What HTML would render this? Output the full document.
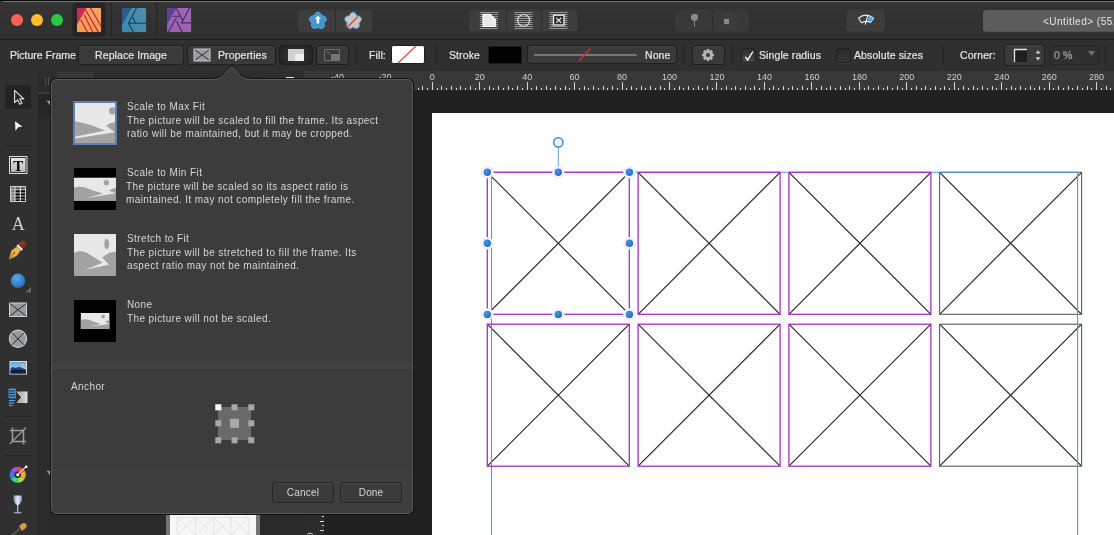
<!DOCTYPE html>
<html><head><meta charset="utf-8">
<style>
*{margin:0;padding:0;box-sizing:border-box}
html,body{width:1114px;height:535px;overflow:hidden;background:#222;font-family:"Liberation Sans",sans-serif;color:#d8d8d8}
.a{position:absolute}
.lbl,.pt,.gs{will-change:transform}
#title{left:0;top:0;width:1114px;height:39px;background:linear-gradient(#353535,#2f2f2f);border-top:1px solid #0a0a0a}
#title:before{content:"";position:absolute;left:3px;top:0;width:1111px;height:1px;background:#757575}
#tline{left:0;top:39px;width:1114px;height:1px;background:#1c1c1c}
#toolbar{left:0;top:40px;width:1114px;height:31px;background:#2f2f2f}
#tools{left:0;top:71px;width:38px;height:464px;background:#303030}
#pages{left:38px;top:71px;width:266px;height:464px;background:linear-gradient(#2e2e2e,#2c2c2c 8px,#2a2a2a 22px)}
#hruler{left:304px;top:71px;width:810px;height:19px;background:#383838}
#vruler{left:304px;top:90px;width:20px;height:445px;background:#2c2c2c}
#canvas{left:324px;top:90px;width:790px;height:445px;background:#212121}
#page{left:432px;top:113px;width:682px;height:422px;background:#fff}
.btn{position:absolute;background:#3a3a3a;border:1px solid #1f1f1f;border-radius:3px;box-shadow:inset 0 1px 0 #444}
.lbl{position:absolute;font-size:10.5px;color:#e6e6e6;white-space:nowrap;line-height:12px;letter-spacing:0.1px;-webkit-text-stroke:0.2px #e6e6e6}
.sep{position:absolute;width:1px;background:#232323}
.tgrp{position:absolute;background:#3b3b3b;border-radius:4px}
#pop{left:51px;top:79px;width:362px;height:435px;background:#3c3c3c;border:1px solid #5a5a5a;border-radius:5px;box-shadow:0 0 0 1px #111}
.pt{position:absolute;font-size:10px;letter-spacing:0.4px;color:#d6d6d6;white-space:nowrap;line-height:13px}
.pbtn{position:absolute;background:#3b3b3b;border:1px solid #252525;border-radius:3px;box-shadow:inset 0 1px 0 #454545}
</style></head><body>
<div id="title" class="a"></div>

<svg class="a" style="left:0;top:0" width="1114" height="39" viewBox="0 0 1114 39">
<defs>
<linearGradient id="pubg" x1="0" y1="0" x2="0" y2="1"><stop offset="0" stop-color="#f7a468"/><stop offset="1" stop-color="#fb9a4e"/></linearGradient>
<linearGradient id="desg" x1="1" y1="0" x2="0" y2="1"><stop offset="0" stop-color="#4e8fa5"/><stop offset="1" stop-color="#3a88b5"/></linearGradient>
<linearGradient id="phog" x1="1" y1="0" x2="0" y2="1"><stop offset="0" stop-color="#9f6ab0"/><stop offset="1" stop-color="#9c5bb2"/></linearGradient>
<clipPath id="c1"><rect x="77" y="8" width="24.3" height="24.3" rx="1.5"/></clipPath>
<clipPath id="c2"><rect x="122" y="8" width="24.3" height="24.3" rx="1.5"/></clipPath>
<clipPath id="c3"><rect x="167" y="8" width="24.3" height="24.3" rx="1.5"/></clipPath>
</defs>
<circle cx="17" cy="20" r="6" fill="#fe5f57"/>
<circle cx="37" cy="20" r="6" fill="#febc2e"/>
<circle cx="57" cy="20" r="6" fill="#28c840"/>
<rect x="72.5" y="3" width="33" height="33.5" rx="4" fill="#242424"/>
<g clip-path="url(#c1)">
<rect x="77" y="8" width="24.3" height="24.3" fill="url(#pubg)"/>
<path d="M77 8H86.6L77 24.6Z" fill="#c8294e"/>
<g stroke="#b8203f" stroke-width="1.1"><path d="M90.3 7.5L101.5 27M85.8 10.3L98.7 32.6M84 14.5L93.1 32.6M80.7 19.8L87.7 32.6"/></g>
</g>
<path d="M111.5 3V37M156.5 3V37" stroke="#232323" stroke-width="1"/>
<g clip-path="url(#c2)">
<rect x="122" y="8" width="24.3" height="24.3" fill="url(#desg)"/>
<path d="M122 8H131.6L122 24.9Z" fill="#2b5b8a"/>
<g stroke="#1e3d5e" stroke-width="1.1" fill="none"><path d="M136.7 7.5L128.5 23.2L133.5 32.6M128.5 23.2H146.5M132.7 17.1L135.8 23.2"/></g>
</g>
<g clip-path="url(#c3)">
<rect x="167" y="8" width="24.3" height="24.3" fill="url(#phog)"/>
<path d="M167 8H176.6L167 24.6Z" fill="#5c4590"/>
<g stroke="#3d2d6a" stroke-width="1.1" fill="none"><path d="M176.4 8.5L182.8 20.5M172.4 16.2H180.8M189.8 7.5L181.6 22.9H191.5M176.5 17.5L168 32.6M176.8 21.5L182.3 32.6"/></g>
</g>
<rect x="298" y="10" width="74" height="22" rx="3.5" fill="#3d3d3d"/>
<path d="M335.5 10V32" stroke="#2d2d2d"/>
<path d="M317.90 12.30L318.44 12.35L318.96 12.50L319.46 12.74L319.91 13.07L320.32 13.47L320.67 13.91L320.96 14.39L321.21 14.89L321.41 15.37L321.60 15.80L322.07 15.85L322.60 15.90L323.14 15.98L323.69 16.11L324.22 16.31L324.73 16.57L325.18 16.90L325.56 17.30L325.86 17.75L326.08 18.24L326.20 18.77L326.22 19.31L326.14 19.86L325.97 20.39L325.72 20.90L325.40 21.37L325.03 21.80L324.64 22.19L324.24 22.53L323.89 22.85L323.99 23.31L324.11 23.82L324.20 24.36L324.25 24.93L324.22 25.49L324.13 26.05L323.95 26.58L323.70 27.07L323.36 27.50L322.95 27.86L322.49 28.13L321.98 28.32L321.44 28.41L320.88 28.42L320.32 28.33L319.77 28.18L319.25 27.96L318.76 27.71L318.31 27.44L317.90 27.20L317.49 27.44L317.04 27.71L316.55 27.96L316.03 28.18L315.48 28.33L314.92 28.42L314.36 28.41L313.82 28.32L313.31 28.13L312.85 27.86L312.44 27.50L312.10 27.07L311.85 26.58L311.67 26.05L311.58 25.49L311.55 24.93L311.60 24.36L311.69 23.82L311.81 23.31L311.91 22.85L311.56 22.53L311.16 22.19L310.77 21.80L310.40 21.37L310.08 20.90L309.83 20.39L309.66 19.86L309.58 19.31L309.60 18.77L309.72 18.24L309.94 17.75L310.24 17.30L310.62 16.90L311.07 16.57L311.58 16.31L312.11 16.11L312.66 15.98L313.20 15.90L313.73 15.85L314.20 15.80L314.39 15.37L314.59 14.89L314.84 14.39L315.13 13.91L315.48 13.47L315.89 13.07L316.34 12.74L316.84 12.50L317.36 12.35L317.90 12.30Z" fill="#3d97d6" stroke="#6cb8ec" stroke-width="1"/>
<path d="M317.9 15.5L321 19H319.2V23.5H316.6V19H314.8Z" fill="#fff"/>
<path d="M353.10 12.30L353.64 12.35L354.16 12.50L354.66 12.74L355.11 13.07L355.52 13.47L355.87 13.91L356.16 14.39L356.41 14.89L356.61 15.37L356.80 15.80L357.27 15.85L357.80 15.90L358.34 15.98L358.89 16.11L359.42 16.31L359.93 16.57L360.38 16.90L360.76 17.30L361.06 17.75L361.28 18.24L361.40 18.77L361.42 19.31L361.34 19.86L361.17 20.39L360.92 20.90L360.60 21.37L360.23 21.80L359.84 22.19L359.44 22.53L359.09 22.85L359.19 23.31L359.31 23.82L359.40 24.36L359.45 24.93L359.42 25.49L359.33 26.05L359.15 26.58L358.90 27.07L358.56 27.50L358.15 27.86L357.69 28.13L357.18 28.32L356.64 28.41L356.08 28.42L355.52 28.33L354.97 28.18L354.45 27.96L353.96 27.71L353.51 27.44L353.10 27.20L352.69 27.44L352.24 27.71L351.75 27.96L351.23 28.18L350.68 28.33L350.12 28.42L349.56 28.41L349.02 28.32L348.51 28.13L348.05 27.86L347.64 27.50L347.30 27.07L347.05 26.58L346.87 26.05L346.78 25.49L346.75 24.93L346.80 24.36L346.89 23.82L347.01 23.31L347.11 22.85L346.76 22.53L346.36 22.19L345.97 21.80L345.60 21.37L345.28 20.90L345.03 20.39L344.86 19.86L344.78 19.31L344.80 18.77L344.92 18.24L345.14 17.75L345.44 17.30L345.82 16.90L346.27 16.57L346.78 16.31L347.31 16.11L347.86 15.98L348.40 15.90L348.93 15.85L349.40 15.80L349.59 15.37L349.79 14.89L350.04 14.39L350.33 13.91L350.68 13.47L351.09 13.07L351.54 12.74L352.04 12.50L352.56 12.35L353.10 12.30Z" fill="#c6c6c6" stroke="#4a9ee0" stroke-width="1"/>
<path d="M347.3 27.2L357.8 16.8" stroke="#f03a2c" stroke-width="1.3"/>
<rect x="469" y="10" width="108.5" height="21.6" rx="3.5" fill="#3d3d3d"/>
<path d="M506.5 10V31.6M541.5 10V31.6" stroke="#2d2d2d"/>
<g stroke="#9e9e9e" stroke-width="0.9">
<path d="M479.8 12.5H498M479.8 14.5H498M479.8 16.5H498M479.8 18.5H498M479.8 20.5H498M479.8 22.5H498M479.8 24.5H498M479.8 26.5H498M479.8 28.5H498"/><path d="M514.5 12.5H532.5M514.5 14.5H532.5M514.5 16.5H532.5M514.5 18.5H532.5M514.5 20.5H532.5M514.5 22.5H532.5M514.5 24.5H532.5M514.5 26.5H532.5M514.5 28.5H532.5"/><path d="M549.5 12.5H567.5M549.5 14.5H567.5M549.5 16.5H567.5M549.5 18.5H567.5M549.5 20.5H567.5M549.5 22.5H567.5M549.5 24.5H567.5M549.5 26.5H567.5M549.5 28.5H567.5"/></g>
<path d="M483 14.3H490L495.2 19.3V26.5H483Z" fill="#e8e8e8" stroke="#fff" stroke-width="1.2"/>
<circle cx="523.6" cy="20.4" r="5.9" fill="none" stroke="#e6e6e6" stroke-width="1.1"/>
<rect x="553.5" y="15.2" width="10.5" height="9.8" fill="#2e2e2e" stroke="#f0f0f0" stroke-width="1.3"/>
<path d="M556.3 18L561.2 22.6M561.2 18L556.3 22.6" stroke="#f0f0f0" stroke-width="1.2"/>
<rect x="675.3" y="10" width="73.5" height="21.8" rx="3.5" fill="#393939"/>
<path d="M712.4 10V31.8" stroke="#2d2d2d"/>
<circle cx="694.5" cy="17.3" r="3.6" fill="#8a8a8a"/>
<path d="M694.5 20V26.6" stroke="#8a8a8a" stroke-width="1"/>
<g stroke="#444" stroke-width="0.8"><path d="M722 13.3H732M722 15.3H738M722 17.3H732M730 19.3H738M730 21.3H736M730 23.3H738M722 25.3H732M722 27.3H738"/></g>
<rect x="724" y="18.9" width="5" height="5" fill="#8c8c8c"/>
<rect x="846.4" y="10.2" width="38.4" height="21.6" rx="3.5" fill="#3d3d3d"/>
<path d="M858.6 18.2Q865.5 12 873.6 18.2L870.5 22.5Q867.2 20.2 861.5 22.7Z" fill="none" stroke="#f2f2f2" stroke-width="1.1" stroke-linejoin="round"/>
<path d="M868.2 16.5Q871 16.8 873.2 18.2L870.6 21.8Q869.2 20.6 867.6 20.4Z" fill="#4da3ea"/>
<path d="M867.5 16.2L865.3 24.7" stroke="#f2f2f2" stroke-width="1.1"/>
<rect x="983" y="10" width="140" height="21.8" rx="3.5" fill="#5c5c5c"/>
</svg>
<div class="a gs" style="left:1043px;top:15px;font-size:10px;color:#e6e6e6;white-space:nowrap;line-height:13px;letter-spacing:0.5px">&lt;Untitled&gt; (55.3%)</div>
<div id="tline" class="a"></div>
<div id="toolbar" class="a"></div>
<div id="tools" class="a"></div>
<!-- TOOLBAR -->
<div class="lbl" style="left:10px;top:49px;letter-spacing:0">Picture Frame</div>
<div class="btn" style="left:78px;top:45px;width:106px;height:20px"></div>
<div class="lbl" style="left:78px;top:49px;width:106px;text-align:center">Replace Image</div>
<div class="btn" style="left:187px;top:45px;width:89px;height:20px"></div>
<svg class="a" style="left:193px;top:48px" width="18" height="14"><rect x="1" y="1" width="16" height="12" fill="#9c9c9c" stroke="#c8c8c8" stroke-width="1"/><path d="M2 2L16 12M16 2L2 12" stroke="#25325a" stroke-width="1"/></svg>
<div class="lbl" style="left:218px;top:49px">Properties</div>
<div class="btn" style="left:279px;top:45px;width:34px;height:20px;background:radial-gradient(ellipse at center,#3a3a3a 0%,#2a2a2a 60%,#1f1f1f 100%);box-shadow:none"></div>
<svg class="a" style="left:288px;top:49px" width="16" height="12"><rect x="0" y="0" width="16" height="12" fill="#d0d0d0"/><rect x="7" y="5" width="9" height="7" fill="#efefef"/></svg>
<div class="btn" style="left:316px;top:45px;width:33px;height:20px"></div>
<svg class="a" style="left:324px;top:49px" width="16" height="12"><rect x="0.5" y="0.5" width="15" height="11" fill="#3a3a3a" stroke="#6c6c6c"/><rect x="7" y="5" width="8.5" height="6.5" fill="#777"/><path d="M2 2L6 5" stroke="#6c6c6c"/></svg>
<div class="sep" style="left:356px;top:46px;height:19px"></div>
<div class="lbl" style="left:369px;top:49px">Fill:</div>
<svg class="a" style="left:391px;top:45px" width="34" height="19"><rect x="0.5" y="0.5" width="33" height="18" rx="2" fill="#fff" stroke="#1e1e1e"/><path d="M7 18L25 1" stroke="#f0484e" stroke-width="1.3"/></svg>
<div class="sep" style="left:436px;top:46px;height:19px"></div>
<div class="lbl" style="left:449px;top:49px">Stroke</div>
<div class="a" style="left:488px;top:46px;width:34px;height:18px;background:#000;border:1px solid #1c1c1c;border-radius:1px"></div>
<div class="btn" style="left:527px;top:45px;width:150px;height:19px"></div>
<div class="a" style="left:534px;top:54px;width:103px;height:2px;background:#777;border-radius:1px"></div>
<svg class="a" style="left:577px;top:47px" width="16" height="15"><path d="M2.5 13.5L13.5 1.5" stroke="#d8303a" stroke-width="1.5"/></svg>
<div class="lbl" style="left:645px;top:49px">None</div>
<div class="sep" style="left:683px;top:46px;height:19px"></div>
<div class="btn" style="left:692px;top:45px;width:33px;height:20px"></div>
<svg class="a" style="left:700px;top:47px" width="16" height="16" viewBox="0 0 16 16"><g fill="#b4b4b4"><circle cx="8" cy="8" r="4.8"/><rect x="6.7" y="2" width="2.6" height="12" rx="0.4"/><rect x="6.7" y="2" width="2.6" height="12" rx="0.4" transform="rotate(45 8 8)"/><rect x="6.7" y="2" width="2.6" height="12" rx="0.4" transform="rotate(90 8 8)"/><rect x="6.7" y="2" width="2.6" height="12" rx="0.4" transform="rotate(135 8 8)"/></g><circle cx="8" cy="8" r="2.1" fill="#3a3a3a"/></svg>
<div class="sep" style="left:732px;top:46px;height:19px"></div>
<div class="a" style="left:741px;top:48px;width:15px;height:15px;background:linear-gradient(#2e2e2e,#474747);border:1px solid #1f1f1f;border-radius:3px;box-shadow:0 1px 0 #3a3a3a"></div>
<svg class="a" style="left:742px;top:49px" width="14" height="14"><path d="M3.8 8.3L5.6 11.2L10.6 3" stroke="#fff" stroke-width="1.4" fill="none" stroke-linecap="round" stroke-linejoin="round"/></svg>
<div class="lbl" style="left:759px;top:49px">Single radius</div>
<div class="a" style="left:836px;top:48px;width:15px;height:15px;background:linear-gradient(#2a2a2a,#353535);border:1px solid #1f1f1f;border-radius:3px;box-shadow:0 1px 0 #3a3a3a"></div>
<div class="lbl" style="left:854px;top:49px">Absolute sizes</div>
<div class="sep" style="left:943px;top:46px;height:19px"></div>
<div class="lbl" style="left:960px;top:49px">Corner:</div>
<div class="btn" style="left:1004px;top:44px;width:41px;height:22px"></div>
<svg class="a" style="left:1013px;top:48px" width="16" height="15"><rect x="1" y="1" width="13" height="13" fill="#1e1e1e"/><path d="M1.5 14V1.5H14" stroke="#e6e6e6" stroke-width="1.3" fill="none"/></svg>
<svg class="a" style="left:1034px;top:48px" width="8" height="15"><path d="M4 2.2L6.4 5.6H1.6Z M1.6 9.2H6.4L4 12.6Z" fill="#d0d0d0"/></svg>
<div class="a" style="left:1050px;top:45px;width:49px;height:20px;background:#303030;border:1px solid #262626;border-radius:3px;box-shadow:inset 0 1px 0 #2a2a2a"></div>
<div class="lbl" style="left:1054px;top:49px;color:#6e6e6e">0 %</div>
<svg class="a" style="left:1088px;top:51px" width="8" height="7"><path d="M0 0H7L3.5 5Z" fill="#6e6e6e"/></svg>
<div class="sep" style="left:1105px;top:46px;height:19px"></div>

<div id="pages" class="a"></div>
<svg class="a gs" style="left:0;top:0" width="38" height="535" viewBox="0 0 38 535">
<defs>
<linearGradient id="tg" x1="0" y1="0" x2="0" y2="1"><stop offset="0" stop-color="#e8e8e8"/><stop offset="1" stop-color="#b8b8b8"/></linearGradient>
<radialGradient id="bg1" cx="0.4" cy="0.3" r="0.8"><stop offset="0" stop-color="#5aa8ee"/><stop offset="1" stop-color="#1d64b6"/></radialGradient>
<linearGradient id="sky" x1="0" y1="0" x2="0" y2="1"><stop offset="0" stop-color="#5ea9e6"/><stop offset="1" stop-color="#c9e2f5"/></linearGradient>
<linearGradient id="wrap" x1="0" y1="0" x2="1" y2="0"><stop offset="0" stop-color="#9a9a9a"/><stop offset="1" stop-color="#e0e0e0"/></linearGradient>
<linearGradient id="glass" x1="0" y1="0" x2="1" y2="0"><stop offset="0" stop-color="#7f8fb0"/><stop offset="0.5" stop-color="#e6ecf6"/><stop offset="1" stop-color="#8e9cc0"/></linearGradient>
</defs>
<!-- selected move tool -->
<rect x="5" y="85" width="26" height="24" rx="3" fill="#232323"/>
<path d="M14.6 90.3V102.6L17.5 99.9L19.8 104.3L22 103.2L19.8 98.9H23.8Z" fill="#2a2a2a" stroke="#e0e0e0" stroke-width="1.1" stroke-linejoin="round"/>
<!-- node tool -->
<path d="M14.6 120.6L23.4 126.8L18.4 127.6L15.1 131.8Z" fill="#fff" stroke="#111" stroke-width="0.7" stroke-linejoin="round"/>
<path d="M5 145.5H31" stroke="#262626" stroke-width="1"/>
<!-- T tool -->
<rect x="9.5" y="156.5" width="17.5" height="17" fill="none" stroke="#dcdcdc" stroke-width="1"/>
<rect x="11" y="158" width="14.5" height="14" fill="url(#tg)"/>
<text x="18.3" y="170.6" font-family="Liberation Serif" font-size="15" font-weight="bold" fill="#000" text-anchor="middle">T</text>
<!-- table -->
<rect x="10" y="186" width="16" height="16" fill="#cfcfcf"/>
<g fill="#000"><rect x="15.6" y="187.2" width="4.2" height="2.1" fill="#555"/><rect x="21" y="187.2" width="4" height="2.1" fill="#555"/>
<rect x="11.2" y="187.2" width="3.2" height="2.1" fill="#666"/>
<rect x="11.2" y="190.3" width="3.2" height="2.1" fill="#777"/><rect x="15.6" y="190.3" width="4.2" height="2.1"/><rect x="21" y="190.3" width="4" height="2.1"/>
<rect x="11.2" y="193.4" width="3.2" height="2.1" fill="#777"/><rect x="15.6" y="193.4" width="4.2" height="2.1"/><rect x="21" y="193.4" width="4" height="2.1"/>
<rect x="11.2" y="196.5" width="3.2" height="2.1" fill="#777"/><rect x="15.6" y="196.5" width="4.2" height="2.1"/><rect x="21" y="196.5" width="4" height="2.1"/>
<rect x="11.2" y="199.4" width="3.2" height="1.6" fill="#777"/><rect x="15.6" y="199.4" width="4.2" height="1.6"/><rect x="21" y="199.4" width="4" height="1.6"/></g>
<!-- A -->
<text x="18.2" y="229.8" font-family="Liberation Serif" font-size="18" fill="#cfcfcf" text-anchor="middle">A</text>
<!-- pen -->
<path d="M9 259.5L11.5 250.5L17 246.5L20.8 250.3L16.8 255.8Z" fill="#f0b54a" stroke="#b07820" stroke-width="0.6"/>
<path d="M9.2 259.3L14.2 252.8" stroke="#7a4a10" stroke-width="0.7"/>
<circle cx="14.4" cy="252.6" r="0.9" fill="#7a4a10"/>
<path d="M16.5 245.8L21.5 250.8L23 249.3L18 244.3Z" fill="#f2f2f2"/>
<path d="M18.2 243.8L23.3 248.9L27.4 243.5L24 240.8Z" fill="#8a2a1a"/>
<path d="M19 244.2L24.2 241.6" stroke="#c0604a" stroke-width="0.8"/>
<!-- circle tool -->
<circle cx="18" cy="280.8" r="7.2" fill="url(#bg1)"/>
<path d="M31 287V292.6H25.4Z" fill="#666"/>
<!-- rect frame -->
<rect x="9.5" y="303" width="17" height="13.5" fill="#9a9a9a" stroke="#d0d0d0" stroke-width="1"/>
<path d="M10.2 303.7L25.8 315.8M25.8 303.7L10.2 315.8" stroke="#1c2850" stroke-width="1"/>
<!-- ellipse frame -->
<circle cx="18" cy="338.8" r="8.6" fill="#9a9a9a" stroke="#cfcfcf" stroke-width="1.2"/>
<path d="M12 332.8L24 344.8M24 332.8L12 344.8" stroke="#1c2850" stroke-width="1"/>
<!-- image icon -->
<rect x="9.5" y="361" width="17.5" height="13.5" fill="#dcdcdc"/>
<rect x="10.5" y="362" width="15.5" height="11.5" fill="url(#sky)"/>
<circle cx="22.5" cy="365" r="1.6" fill="#f5b82e"/>
<path d="M10.5 368.2L13 366.5L15.5 368L19 366.8L26 369.5V373.5H10.5Z" fill="#27457a"/>
<path d="M10.5 370.5Q16 368.5 26 370.8V373.5H10.5Z" fill="#0f1f3e"/>
<path d="M12 367L13 366.4L14.2 367.2Z" fill="#fff"/>
<!-- text wrap -->
<g fill="#4aa0e8"><rect x="9.3" y="389" width="5.8" height="1.3"/><rect x="9.3" y="391.5" width="5.8" height="1.3"/><rect x="9.3" y="394" width="5.8" height="1.3"/><rect x="9.3" y="396.5" width="5.8" height="1.3"/>
<rect x="8.8" y="400" width="6.5" height="1.3"/><rect x="8.8" y="402.6" width="5" height="1.3"/><rect x="8.8" y="405" width="4" height="1.1"/></g>
<path d="M9 389H15.5V398H9Z" fill="none" stroke="#4aa0e8" stroke-width="0.8"/>
<path d="M16.8 391.5H27.5V403H16.8L21.5 397.3Z" fill="url(#wrap)"/>
<path d="M17 391.7L21.7 397.3L17 402.8" fill="none" stroke="#f0f0f0" stroke-width="0.8"/>
<path d="M5 416.5H31" stroke="#262626" stroke-width="1"/>
<!-- crop -->
<g stroke="#9c9c9c" stroke-width="1.6" fill="none"><path d="M12.5 427.5V441.5H26.2"/><path d="M9.8 430.5H23.5V444.3"/><path d="M9.8 444L26 427.5" stroke-width="1.2"/></g>
<path d="M5 455.5H31" stroke="#262626" stroke-width="1"/>
<!-- color wheel -->
<g transform="translate(17.7 474.7)">
<path d="M0 0L0 -8A8 8 0 0 1 6.93 -4Z" fill="#f0463c"/>
<path d="M0 0L6.93 -4A8 8 0 0 1 6.93 4Z" fill="#f5a623"/>
<path d="M0 0L6.93 4A8 8 0 0 1 0 8Z" fill="#a8d84a"/>
<path d="M0 0L0 8A8 8 0 0 1 -6.93 4Z" fill="#3ad67a"/>
<path d="M0 0L-6.93 4A8 8 0 0 1 -6.93 -4Z" fill="#3a78e6"/>
<path d="M0 0L-6.93 -4A8 8 0 0 1 0 -8Z" fill="#b04ad8"/>
<circle r="3.2" fill="#2a2a2a"/>
<path d="M0 0L8.5 -8" stroke="#f0f0f0" stroke-width="1.1"/>
<circle r="1.5" fill="#fff"/><circle cx="8.5" cy="-8" r="1.3" fill="#fff"/>
</g>
<!-- glass -->
<path d="M13.6 495.5H21.8Q22.6 503 17.7 505.4Q12.8 503 13.6 495.5Z" fill="url(#glass)"/>
<path d="M17.7 505V511.8" stroke="#b8c2d8" stroke-width="1.2"/>
<ellipse cx="17.7" cy="512.6" rx="4" ry="0.9" fill="#9aa6c2"/>
<!-- dropper -->
<path d="M18.8 528L11 535.5L13 535.5L20.6 529.6Z" fill="#555"/>
<path d="M19 526.2L22 523.5Q25 522 26.4 524.4Q27.5 527 24.5 529L22 531Z" fill="#d89a3a"/>
</svg>


<div class="a" style="left:38px;top:93px;width:13px;height:442px;background:linear-gradient(#262626,#262626 22px,#2b2b2b 24px)"></div>
<div class="a" style="left:38px;top:92px;width:13px;height:2px;background:#3a3a3a"></div>
<div class="a" style="left:45px;top:77px;width:1px;height:8px;background:#505050"></div>
<div class="a" style="left:48px;top:77px;width:1px;height:8px;background:#505050"></div>
<svg class="a" style="left:46px;top:100px" width="5" height="6"><path d="M0.5 0.8H4.5L4 5.3Z" fill="#9a9a9a"/></svg>
<svg class="a" style="left:46px;top:470px" width="5" height="6"><path d="M0.5 0.8H4.5L4 5.3Z" fill="#9a9a9a"/></svg>
<div class="a" style="left:57px;top:72px;width:37px;height:8px;background:#383838"></div>
<div class="a" style="left:286px;top:77px;width:8px;height:2px;background:#e8e8e8"></div>

<svg class="a" style="left:166px;top:514px" width="94" height="21" viewBox="0 0 94 21">
<rect width="94" height="21" fill="#747474"/><rect x="4" y="0" width="86" height="21" fill="#f6f6f6"/>
<g stroke="#dcdcdc" stroke-width="0.7" fill="none">
<path d="M11.3 3.5H83"/><path d="M11.3 3.5V21M29.5 3.5V21M47.8 3.5V21M65 3.5V21M82.8 3.5V21"/>
<path d="M11.3 3.5L29.5 21M29.5 3.5L11.3 21M29.5 3.5L47.8 21M47.8 3.5L29.5 21M47.8 3.5L65 21M65 3.5L47.8 21M65 3.5L82.8 21M82.8 3.5L65 21"/>
</g></svg>
<div class="a" style="left:301px;top:90px;width:3px;height:445px;background:#2a2a2a"></div>
<div id="hruler" class="a"></div>
<div id="vruler" class="a"></div>
<div id="canvas" class="a"></div>
<div id="page" class="a"></div>
<svg class="a gs" style="left:0;top:0" width="1114" height="535">
<path d="M304.5 88V90M308.5 86V90M313.5 88V90M318.5 86V90M323.5 88V90M327.5 86V90M332.5 88V90M337.5 82V90M342.5 88V90M346.5 86V90M351.5 88V90M356.5 86V90M361.5 88V90M365.5 86V90M370.5 88V90M375.5 86V90M380.5 88V90M384.5 82V90M389.5 88V90M394.5 86V90M399.5 88V90M403.5 86V90M408.5 88V90M413.5 86V90M418.5 88V90M422.5 86V90M427.5 88V90M432.5 82V90M437.5 88V90M441.5 86V90M446.5 88V90M451.5 86V90M456.5 88V90M460.5 86V90M465.5 88V90M470.5 86V90M475.5 88V90M479.5 82V90M484.5 88V90M489.5 86V90M493.5 88V90M498.5 86V90M503.5 88V90M508.5 86V90M512.5 88V90M517.5 86V90M522.5 88V90M527.5 82V90M531.5 88V90M536.5 86V90M541.5 88V90M546.5 86V90M550.5 88V90M555.5 86V90M560.5 88V90M565.5 86V90M569.5 88V90M574.5 82V90M579.5 88V90M584.5 86V90M588.5 88V90M593.5 86V90M598.5 88V90M603.5 86V90M607.5 88V90M612.5 86V90M617.5 88V90M622.5 82V90M626.5 88V90M631.5 86V90M636.5 88V90M641.5 86V90M645.5 88V90M650.5 86V90M655.5 88V90M660.5 86V90M664.5 88V90M669.5 82V90M674.5 88V90M679.5 86V90M683.5 88V90M688.5 86V90M693.5 88V90M698.5 86V90M702.5 88V90M707.5 86V90M712.5 88V90M716.5 82V90M721.5 88V90M726.5 86V90M731.5 88V90M735.5 86V90M740.5 88V90M745.5 86V90M750.5 88V90M754.5 86V90M759.5 88V90M764.5 82V90M769.5 88V90M773.5 86V90M778.5 88V90M783.5 86V90M788.5 88V90M792.5 86V90M797.5 88V90M802.5 86V90M807.5 88V90M811.5 82V90M816.5 88V90M821.5 86V90M826.5 88V90M830.5 86V90M835.5 88V90M840.5 86V90M845.5 88V90M849.5 86V90M854.5 88V90M859.5 82V90M864.5 88V90M868.5 86V90M873.5 88V90M878.5 86V90M883.5 88V90M887.5 86V90M892.5 88V90M897.5 86V90M902.5 88V90M906.5 82V90M911.5 88V90M916.5 86V90M921.5 88V90M925.5 86V90M930.5 88V90M935.5 86V90M940.5 88V90M944.5 86V90M949.5 88V90M954.5 82V90M958.5 88V90M963.5 86V90M968.5 88V90M973.5 86V90M977.5 88V90M982.5 86V90M987.5 88V90M992.5 86V90M996.5 88V90M1001.5 82V90M1006.5 88V90M1011.5 86V90M1015.5 88V90M1020.5 86V90M1025.5 88V90M1030.5 86V90M1034.5 88V90M1039.5 86V90M1044.5 88V90M1049.5 82V90M1053.5 88V90M1058.5 86V90M1063.5 88V90M1068.5 86V90M1072.5 88V90M1077.5 86V90M1082.5 88V90M1087.5 86V90M1091.5 88V90M1096.5 82V90M1101.5 88V90M1106.5 86V90M1110.5 88V90" stroke="#d6d6d6" stroke-width="1" fill="none"/>
<g font-family="Liberation Sans" font-size="9" fill="#cfcfcf" text-anchor="middle"><text x="337.4" y="80">-40</text><text x="384.9" y="80">-20</text><text x="432.3" y="80">0</text><text x="479.8" y="80">20</text><text x="527.2" y="80">40</text><text x="574.6" y="80">60</text><text x="622.1" y="80">80</text><text x="669.5" y="80">100</text><text x="717.0" y="80">120</text><text x="764.5" y="80">140</text><text x="811.9" y="80">160</text><text x="859.4" y="80">180</text><text x="906.8" y="80">200</text><text x="954.2" y="80">220</text><text x="1001.7" y="80">240</text><text x="1049.2" y="80">260</text><text x="1096.6" y="80">280</text></g>
<path d="M320 94.5H324M322 98.5H324M320 103.5H324M322 108.5H324M316 112.5H324M322 117.5H324M320 122.5H324M322 127.5H324M320 131.5H324M322 136.5H324M320 141.5H324M322 146.5H324M320 150.5H324M322 155.5H324M316 160.5H324M322 165.5H324M320 169.5H324M322 174.5H324M320 179.5H324M322 184.5H324M320 188.5H324M322 193.5H324M320 198.5H324M322 203.5H324M316 207.5H324M322 212.5H324M320 217.5H324M322 222.5H324M320 226.5H324M322 231.5H324M320 236.5H324M322 241.5H324M320 245.5H324M322 250.5H324M316 255.5H324M322 260.5H324M320 264.5H324M322 269.5H324M320 274.5H324M322 279.5H324M320 283.5H324M322 288.5H324M320 293.5H324M322 298.5H324M316 302.5H324M322 307.5H324M320 312.5H324M322 317.5H324M320 321.5H324M322 326.5H324M320 331.5H324M322 336.5H324M320 340.5H324M322 345.5H324M316 350.5H324M322 354.5H324M320 359.5H324M322 364.5H324M320 369.5H324M322 373.5H324M320 378.5H324M322 383.5H324M320 388.5H324M322 392.5H324M316 397.5H324M322 402.5H324M320 407.5H324M322 411.5H324M320 416.5H324M322 421.5H324M320 426.5H324M322 430.5H324M320 435.5H324M322 440.5H324M316 445.5H324M322 449.5H324M320 454.5H324M322 459.5H324M320 464.5H324M322 468.5H324M320 473.5H324M322 478.5H324M320 483.5H324M322 487.5H324M316 492.5H324M322 497.5H324M320 502.5H324M322 506.5H324M320 511.5H324M322 516.5H324M320 521.5H324M322 525.5H324M320 530.5H324" stroke="#d6d6d6" stroke-width="1" fill="none"/>
<text x="0" y="0" transform="translate(313,540) rotate(-90)" font-family="Liberation Sans" font-size="9" fill="#cfcfcf" text-anchor="middle">180</text>
</svg>
<svg class="a" style="left:0;top:0" width="1114" height="535" viewBox="0 0 1114 535">
<defs><radialGradient id="hg" cx="0.35" cy="0.35" r="0.7"><stop offset="0" stop-color="#4a93e6"/><stop offset="1" stop-color="#1f6cc8"/></radialGradient></defs>
<path d="M487.3 172.3L629.3 314.3M629.3 172.3L487.3 314.3M638.1 172.3L780.1 314.3M780.1 172.3L638.1 314.3M788.9 172.3L930.9 314.3M930.9 172.3L788.9 314.3M939.6 172.3L1081.6 314.3M1081.6 172.3L939.6 314.3M487.3 324.2L629.3 466.2M629.3 324.2L487.3 466.2M638.1 324.2L780.1 466.2M780.1 324.2L638.1 466.2M788.9 324.2L930.9 466.2M930.9 324.2L788.9 466.2M939.6 324.2L1081.6 466.2M1081.6 324.2L939.6 466.2" fill="none" stroke="#2a2a2a" stroke-width="1.2"/>
<g fill="none" stroke="#5c5c5c" stroke-width="1.1"><rect x="939.6" y="172.3" width="142" height="142"/><rect x="939.6" y="324.2" width="142" height="142"/></g>
<path d="M491.5 172.3H1077.6M491.5 172.3V535M1077.6 172.3V535" fill="none" stroke="#4a9ae8" stroke-width="1.1"/>
<g fill="none" stroke="#a630c8" stroke-width="1.3"><rect x="487.3" y="172.3" width="142" height="142"/><rect x="638.1" y="172.3" width="142" height="142"/><rect x="788.9" y="172.3" width="142" height="142"/><rect x="487.3" y="324.2" width="142" height="142"/><rect x="638.1" y="324.2" width="142" height="142"/><rect x="788.9" y="324.2" width="142" height="142"/></g>
<line x1="558.3" y1="147" x2="558.3" y2="168" stroke="#5aa0ea" stroke-width="1"/>
<circle cx="558.3" cy="142.4" r="4.6" fill="#eef4fc" stroke="#3a8ee6" stroke-width="1.5"/>
<circle cx="487.3" cy="172.3" r="6.2" fill="#ececec"/><circle cx="487.3" cy="172.3" r="4.8" fill="#fafcff"/><circle cx="487.3" cy="172.3" r="3.7" fill="url(#hg)"/><circle cx="487.3" cy="243.3" r="6.2" fill="#ececec"/><circle cx="487.3" cy="243.3" r="4.8" fill="#fafcff"/><circle cx="487.3" cy="243.3" r="3.7" fill="url(#hg)"/><circle cx="487.3" cy="314.4" r="6.2" fill="#ececec"/><circle cx="487.3" cy="314.4" r="4.8" fill="#fafcff"/><circle cx="487.3" cy="314.4" r="3.7" fill="url(#hg)"/><circle cx="558.3" cy="172.3" r="6.2" fill="#ececec"/><circle cx="558.3" cy="172.3" r="4.8" fill="#fafcff"/><circle cx="558.3" cy="172.3" r="3.7" fill="url(#hg)"/><circle cx="558.3" cy="314.4" r="6.2" fill="#ececec"/><circle cx="558.3" cy="314.4" r="4.8" fill="#fafcff"/><circle cx="558.3" cy="314.4" r="3.7" fill="url(#hg)"/><circle cx="629.4" cy="172.3" r="6.2" fill="#ececec"/><circle cx="629.4" cy="172.3" r="4.8" fill="#fafcff"/><circle cx="629.4" cy="172.3" r="3.7" fill="url(#hg)"/><circle cx="629.4" cy="243.3" r="6.2" fill="#ececec"/><circle cx="629.4" cy="243.3" r="4.8" fill="#fafcff"/><circle cx="629.4" cy="243.3" r="3.7" fill="url(#hg)"/><circle cx="629.4" cy="314.4" r="6.2" fill="#ececec"/><circle cx="629.4" cy="314.4" r="4.8" fill="#fafcff"/><circle cx="629.4" cy="314.4" r="3.7" fill="url(#hg)"/>
</svg>
<div id="pop" class="a"></div>
<!-- POPOVER -->
<svg class="a" style="left:205px;top:60px" width="54" height="24" viewBox="205 60 54 24">
<path d="M205 79.5C217 79.5 221 79 224.5 74L229.2 68.6Q231.8 65.6 234.4 68.6L239.1 74C242.6 79 246.6 79.5 258.6 79.5V84H205Z" fill="#3c3c3c"/>
<path d="M205 79.5C217 79.5 221 79 224.5 74L229.2 68.6Q231.8 65.6 234.4 68.6L239.1 74C242.6 79 246.6 79.5 258.6 79.5" fill="none" stroke="#0e0e0e" stroke-width="1" transform="translate(0 -1)"/>
<path d="M205 79.5C217 79.5 221 79 224.5 74L229.2 68.6Q231.8 65.6 234.4 68.6L239.1 74C242.6 79 246.6 79.5 258.6 79.5" fill="none" stroke="#5c5c5c" stroke-width="1"/>
</svg>
<svg class="a" style="left:73px;top:101px" width="44" height="44" viewBox="0 0 44 44"><rect x="1" y="1" width="42" height="42" fill="none" stroke="#5b82b3" stroke-width="2"/><svg x="2" y="2" width="40" height="40" viewBox="0 0 40 40"><rect width="40" height="40" fill="#e8e8e8"/><circle cx="37.6" cy="7.8" r="3.6" fill="#a2a2a2"/><path d="M0 18.3Q14 20.5 29.7 27.6L0 33.8Z" fill="#a2a2a2"/><path d="M0 35.6L40 29.3L31.1 22.7Q35 19.8 40 19V40H0Z" fill="#a2a2a2"/></svg></svg><svg class="a" style="left:74px;top:168px" width="42" height="42" viewBox="0 0 42 42"><rect width="42" height="42" fill="#000"/><svg x="0" y="9.4" width="42" height="23.4" viewBox="0 0 42 23.4"><rect width="42" height="23.4" fill="#e8e8e8"/><circle cx="32.4" cy="5.3" r="2.6" fill="#a2a2a2"/><path d="M0 10.3C6 8.5 11 9.5 18 12.8L29 16.2L12.5 20.5L42 15.8L35 13.4C37 11.5 40 10.5 42 10.5V23.4H0Z" fill="#a2a2a2"/></svg></svg><svg class="a" style="left:74px;top:234px" width="42" height="42" viewBox="0 0 42 42"><rect width="42" height="42" fill="#e8e8e8"/><ellipse cx="32.7" cy="10" rx="2.4" ry="5" fill="#a2a2a2"/><path d="M0 19C4 16.5 9 16.5 14 19.5L28.5 28.8L11.5 35.8L34.9 30.7L28.3 23.6C31 21 38 17 42 17.8V42H0Z" fill="#a2a2a2"/></svg><svg class="a" style="left:74px;top:300px" width="42" height="42" viewBox="0 0 42 42"><rect width="42" height="42" fill="#000"/><svg x="6.6" y="13" width="29" height="16" viewBox="0 0 29 16"><rect width="29" height="16" fill="#e8e8e8"/><circle cx="22.6" cy="3.6" r="1.9" fill="#a2a2a2"/><path d="M0 7C4 5.8 8 6.2 12.5 8.6L20 11L8.5 13.8L29 10.7L24.2 9.1C25.8 7.8 27.5 7.2 29 7.2V16H0Z" fill="#a2a2a2"/></svg></svg>
<div class="pt" style="left:127px;top:100px">Scale to Max Fit</div>
<div class="pt" style="left:127px;top:114px">The picture will be scaled to fill the frame. Its aspect<br>ratio will be maintained, but it may be cropped.</div>
<div class="pt" style="left:127px;top:166px">Scale to Min Fit</div>
<div class="pt" style="left:126px;top:180px">The picture will be scaled so its aspect ratio is<br>maintained. It may not completely fill the frame.</div>
<div class="pt" style="left:127px;top:232px">Stretch to Fit</div>
<div class="pt" style="left:127px;top:246px">The picture will be stretched to fill the frame. Its<br>aspect ratio may not be maintained.</div>
<div class="pt" style="left:127px;top:298px">None</div>
<div class="pt" style="left:127px;top:312px">The picture will not be scaled.</div>
<div class="a" style="left:52px;top:362px;width:360px;height:8px;background:#404040"></div>
<div class="a" style="left:52px;top:370px;width:360px;height:1px;background:#383838"></div>
<div class="pt" style="left:71px;top:380px">Anchor</div>
<svg class="a" style="left:212px;top:401px" width="46" height="46" viewBox="0 0 46 46"><rect x="6" y="6" width="33" height="33" fill="#6a6a6a"/>
<g fill="#a8a8a8"><rect x="19.5" y="3.3" width="6" height="6"/><rect x="36.3" y="3.3" width="6" height="6"/><rect x="3.3" y="19.3" width="6" height="6"/><rect x="36.3" y="19.3" width="6" height="6"/><rect x="3.3" y="36.3" width="6" height="6"/><rect x="19.5" y="36.3" width="6" height="6"/><rect x="36.3" y="36.3" width="6" height="6"/><rect x="18" y="17.8" width="9" height="9"/></g><rect x="3.3" y="3.3" width="6" height="6" fill="#fff"/></svg>
<div class="a" style="left:52px;top:471px;width:360px;height:42px;background:#3e3e3e;border-radius:0 0 4px 4px"></div>
<div class="pbtn" style="left:272px;top:482px;width:62px;height:21px"></div>
<div class="pt" style="left:272px;top:486px;width:62px;text-align:center;letter-spacing:0.2px">Cancel</div>
<div class="pbtn" style="left:340px;top:482px;width:62px;height:21px"></div>
<div class="pt" style="left:340px;top:486px;width:62px;text-align:center;letter-spacing:0.1px">Done</div>


</body></html>
